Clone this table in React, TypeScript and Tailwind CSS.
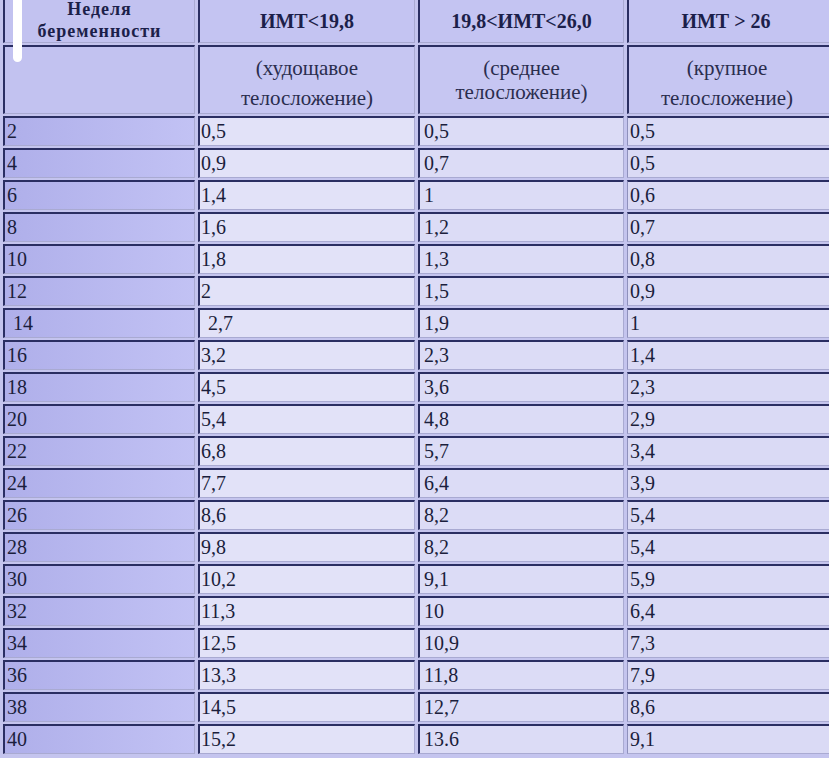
import React from "react";

const rows: [string, string, string, string][] = [
  ["2", "0,5", "0,5", "0,5"],
  ["4", "0,9", "0,7", "0,5"],
  ["6", "1,4", "1", "0,6"],
  ["8", "1,6", "1,2", "0,7"],
  ["10", "1,8", "1,3", "0,8"],
  ["12", "2", "1,5", "0,9"],
  ["14", "2,7", "1,9", "1"],
  ["16", "3,2", "2,3", "1,4"],
  ["18", "4,5", "3,6", "2,3"],
  ["20", "5,4", "4,8", "2,9"],
  ["22", "6,8", "5,7", "3,4"],
  ["24", "7,7", "6,4", "3,9"],
  ["26", "8,6", "8,2", "5,4"],
  ["28", "9,8", "8,2", "5,4"],
  ["30", "10,2", "9,1", "5,9"],
  ["32", "11,3", "10", "6,4"],
  ["34", "12,5", "10,9", "7,3"],
  ["36", "13,3", "11,8", "7,9"],
  ["38", "14,5", "12,7", "8,6"],
  ["40", "15,2", "13.6", "9,1"],
];

const bd =
  "border-t-2 border-l-2 border-b border-r border-t-[#2a2e62] border-l-[#2a2e62] border-b-[#a9aad2] border-r-[#a9aad2]";
const bdSoftLeft =
  "border-t-2 border-l border-b border-r border-t-[#2a2e62] border-l-[#8e90bc] border-b-[#a9aad2] border-r-[#a9aad2]";

export default function App() {
  return (
    <div className="relative w-[829px] h-[758px] overflow-hidden bg-[#c4c4ee] [font-family:'Liberation_Serif','Times_New_Roman',serif] text-[#1b1e3c]">
      <div className="grid grid-cols-[192px_217px_206px_205px] gap-x-[3px] gap-y-[2px] pl-[3px] -mt-[7px]">
        {/* header row 1 */}
        <div className={`${bd} h-[50px] bg-[#c2c2f0] flex flex-col items-center justify-center pt-[3px] font-bold text-[18px] leading-[22px] tracking-[1px] text-[#1c1f4a]`}>
          <span>Неделя</span>
          <span>беременности</span>
        </div>
        <div className={`${bd} h-[50px] bg-[#c4c4f2] flex items-center justify-center pt-[5px] font-bold text-[20px] text-[#1c1f4a]`}>
          ИМТ&lt;19,8
        </div>
        <div className={`${bd} h-[50px] bg-[#c4c4f2] flex items-center justify-center pt-[5px] font-bold text-[20px] text-[#1c1f4a]`}>
          19,8&lt;ИМТ&lt;26,0
        </div>
        <div className={`${bd} h-[50px] bg-[#c4c4f2] flex items-center justify-center pt-[5px] pr-[8px] font-bold text-[20px] text-[#1c1f4a]`}>
          ИМТ &gt; 26
        </div>

        {/* header row 2 */}
        <div className={`${bd} h-[69px] bg-[#c2c2f0]`} />
        <div className={`${bd} h-[69px] bg-[#c6c6f2] flex flex-col items-center justify-center pt-[6px] text-[21px] leading-[30px] text-[#2a2d4e]`}>
          <span>(худощавое</span>
          <span>телосложение)</span>
        </div>
        <div className={`${bd} h-[69px] bg-[#c6c6f2] flex flex-col items-center justify-center text-[21px] leading-[24px] text-[#2a2d4e]`}>
          <span>(среднее</span>
          <span>телосложение)</span>
        </div>
        <div className={`${bd} h-[69px] bg-[#c6c6f2] flex flex-col items-center justify-center pt-[5px] pr-[6px] text-[21px] leading-[30px] text-[#2a2d4e]`}>
          <span>(крупное</span>
          <span>телосложение)</span>
        </div>

        {/* data rows */}
        {rows.map((r) => {
          const indent = r[0] === "14";
          return (
            <React.Fragment key={r[0]}>
              <div
                className={`${bd} h-[30px] bg-gradient-to-r from-[#afafea] to-[#c2c2f4] text-[20px] leading-[27px] ${
                  indent ? "pl-[8px]" : "pl-[2px]"
                }`}
              >
                {r[0]}
              </div>
              <div
                className={`${bd} h-[30px] bg-[#e2e2f8] text-[20px] leading-[27px] ${
                  indent ? "pl-[8px]" : "pl-[1px]"
                }`}
              >
                {r[1]}
              </div>
              <div className={`${bd} h-[30px] bg-[#dcdcf6] text-[20px] leading-[27px] pl-[4px]`}>
                {r[2]}
              </div>
              <div className={`${bdSoftLeft} h-[30px] bg-[#dadaf5] text-[20px] leading-[27px] pl-[2px]`}>
                {r[3]}
              </div>
            </React.Fragment>
          );
        })}
      </div>

      {/* white overlay bar */}
      <div className="absolute left-[13px] top-0 w-[9px] h-[62px] bg-white rounded-b-full" />
    </div>
  );
}
